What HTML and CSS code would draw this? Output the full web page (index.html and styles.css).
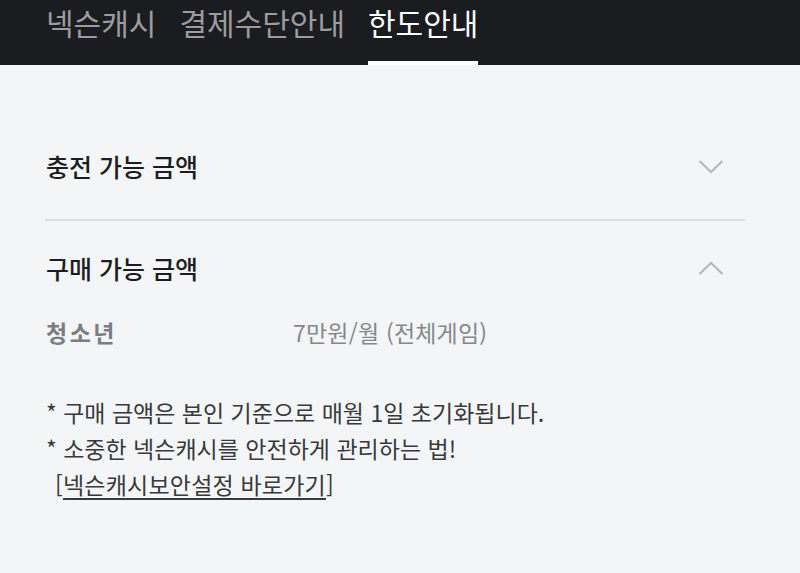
FILE: index.html
```html
<!DOCTYPE html>
<html lang="ko">
<head>
<meta charset="utf-8">
<title>한도안내</title>
<link rel="stylesheet" href="styles.css">
</head>
<body>
<header class="tabs">
  <a class="tab">넥슨캐시</a>
  <a class="tab">결제수단안내</a>
  <a class="tab active">한도안내</a>
</header>
<main class="content">
  <section class="panel first">
    <div class="panel-head">
      <h2 class="panel-title">충전 가능 금액</h2>
      <svg class="chev" width="26" height="15" viewBox="0 0 26 15"><path d="M1.5 2 L13 13 L24.5 2" fill="none" stroke="#b4b6b9" stroke-width="2"/></svg>
    </div>
  </section>
  <section class="panel second">
    <div class="panel-head">
      <h2 class="panel-title">구매 가능 금액</h2>
      <svg class="chev" width="26" height="15" viewBox="0 0 26 15"><path d="M1.5 13 L13 2 L24.5 13" fill="none" stroke="#b4b6b9" stroke-width="2"/></svg>
    </div>
    <div class="row">
      <span class="row-label">청소년</span>
      <span class="row-value">7만원/월 (전체게임)</span>
    </div>
    <div class="notes">
      <p>* 구매 금액은 본인 기준으로 매월 1일 초기화됩니다.</p>
      <p>* 소중한 넥슨캐시를 안전하게 관리하는 법!</p>
      <p class="link-line">[<a class="link">넥슨캐시보안설정 바로가기</a>]</p>
    </div>
  </section>
</main>
</body>
</html>
```
FILE: styles.css
```css
* { box-sizing: border-box; }
html, body { margin: 0; padding: 0; }
body {
  background: #f4f5f7;
  font-family: "Noto Sans CJK KR", "Noto Sans", sans-serif;
  width: 800px;
  height: 573px;
  overflow: hidden;
}
.tabs {
  background: #1b1c20;
  height: 65px;
  display: flex;
  gap: 23px;
  padding-left: 46px;
}
.tab {
  font-size: 30px;
  line-height: 44px;
  color: #9b9c9f;
  height: 65px;
  letter-spacing: 0;
  border-bottom: 4px solid transparent;
}
.tab.active {
  color: #ffffff;
  border-bottom-color: #ffffff;
}
.content {
  padding: 0 55px 0 45px;
}
.panel.first {
  padding-top: 83px;
  padding-bottom: 35px;
  border-bottom: 2px solid #dedfe2;
}
.panel.second {
  padding-top: 29px;
}
.panel-head {
  display: flex;
  align-items: center;
  justify-content: space-between;
  height: 36px;
  padding-right: 21px;
}
.panel-title {
  margin: 0;
  font-size: 25px;
  font-weight: 500;
  color: #1c1d21;
  line-height: 36px;
  padding-left: 1px;
}
.row {
  display: flex;
  margin-top: 30px;
  line-height: 32px;
  font-size: 23px;
  padding-left: 1px;
}
.row-label {
  width: 247px;
  font-weight: 700;
  color: #7a7d82;
  letter-spacing: 2.5px;
}
.row-value {
  color: #85878b;
  letter-spacing: 0.2px;
}
.notes {
  margin-top: 46px;
  font-size: 23px;
  color: #38393c;
  padding-left: 1px;
}
.notes p {
  margin: 0;
  line-height: 36px;
}
.link-line {
  padding-left: 9px;
  letter-spacing: 0.2px;
}
.link {
  color: #38393c;
  text-decoration: underline;
  text-underline-offset: 4px;
}
```
